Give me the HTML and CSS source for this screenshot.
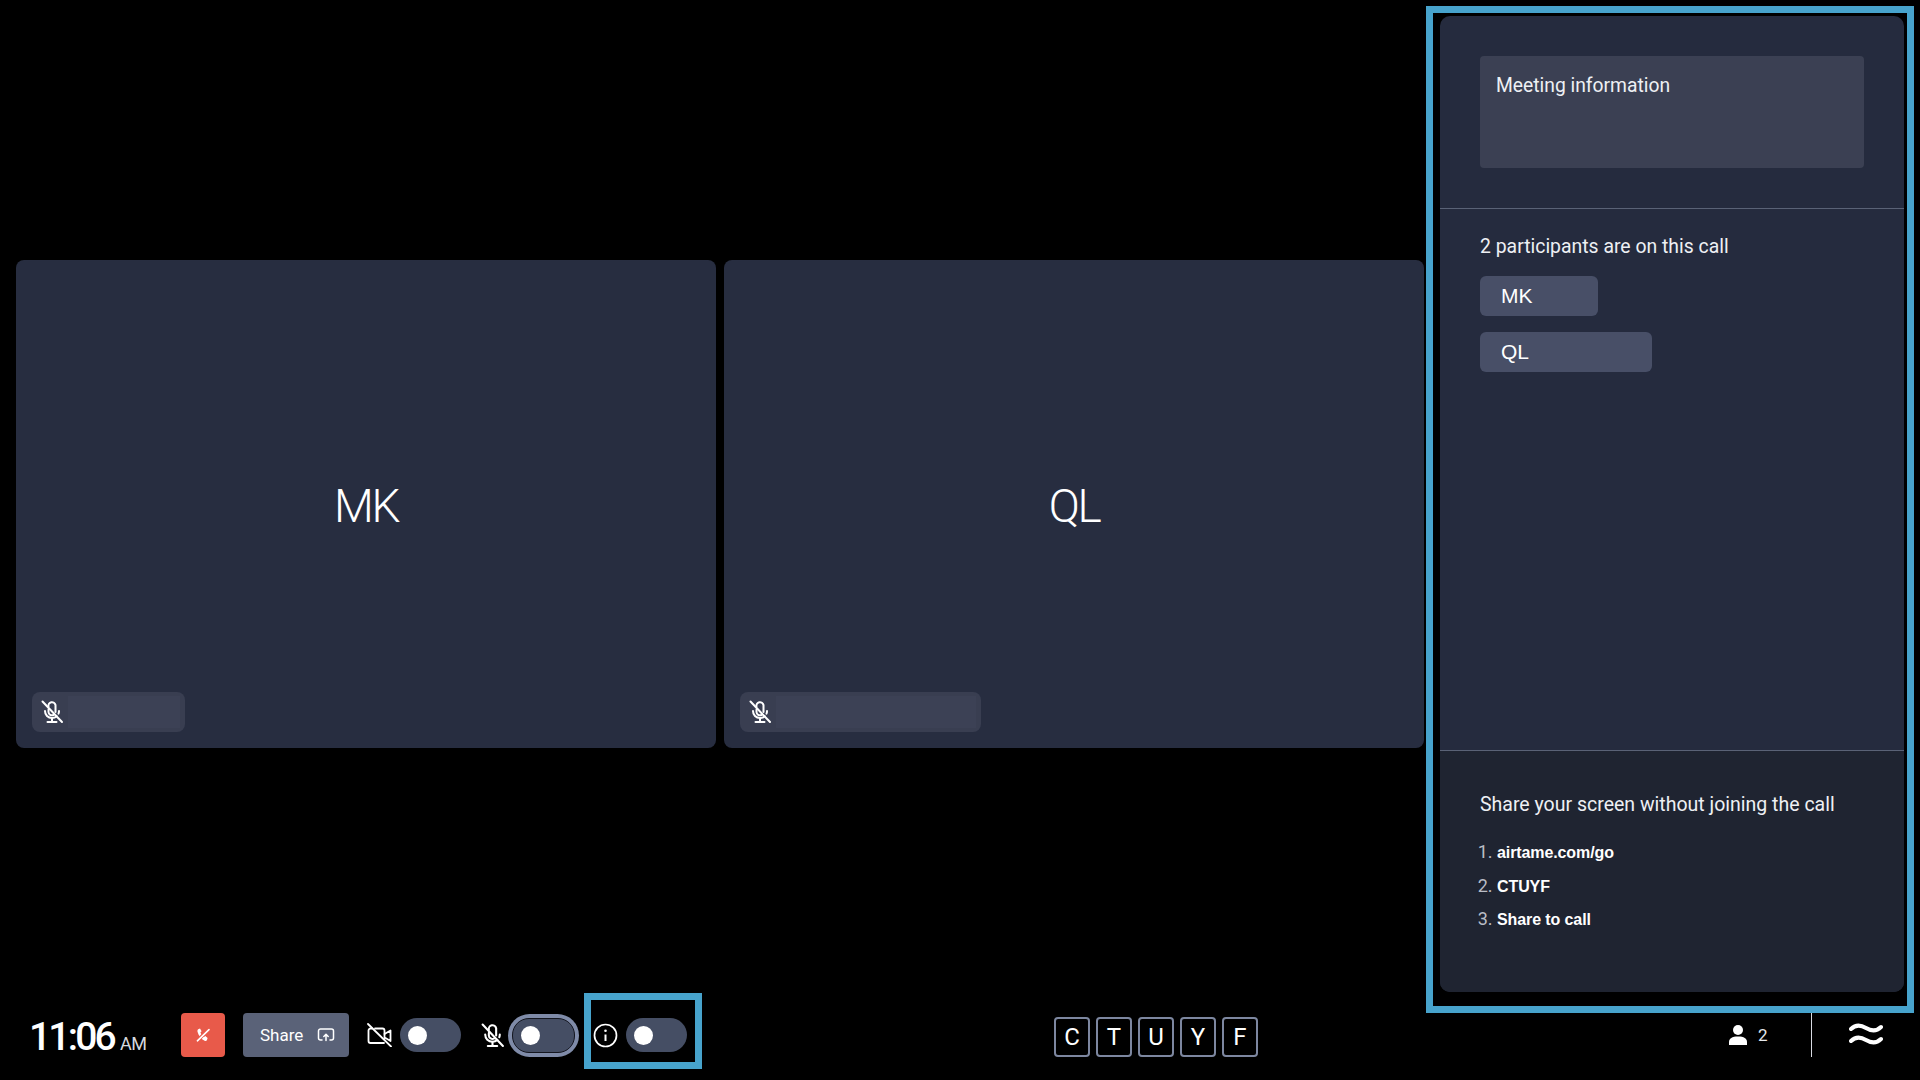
FILE: index.html
```html
<!DOCTYPE html>
<html lang="en">
<head>
  <meta charset="UTF-8">
  <meta name="viewport" content="width=device-width, initial-scale=1.0">
  <title>Meeting</title>
  <link rel="stylesheet" href="styles.css">
</head>
<body>
  <div class="app">
    <div class="top">
      <main class="stage">
        <div class="tile">
          <span class="tile-name">MK</span>
          <div class="tile-label tile-label-short">
            <svg class="tile-mic" viewBox="0 0 24 24"><use href="#icon-mic-off"/></svg>
            <div class="tile-label-fill"></div>
          </div>
        </div>
        <div class="tile">
          <span class="tile-name">QL</span>
          <div class="tile-label tile-label-long">
            <svg class="tile-mic" viewBox="0 0 24 24"><use href="#icon-mic-off"/></svg>
            <div class="tile-label-fill"></div>
          </div>
        </div>
      </main>

      <div class="panel-frame">
        <aside class="panel">
          <section class="panel-info">
            <div class="info-box">Meeting information</div>
          </section>
          <section class="panel-people">
            <p class="people-title">2 participants are on this call</p>
            <div class="chip chip-short">MK</div>
            <div class="chip chip-long">QL</div>
          </section>
          <section class="panel-share">
            <p class="share-title">Share your screen without joining the call</p>
            <ol class="share-steps">
              <li><b>airtame.com/go</b></li>
              <li><b>CTUYF</b></li>
              <li><b>Share to call</b></li>
            </ol>
          </section>
        </aside>
      </div>
    </div>

    <footer class="bar">
      <div class="clock"><span class="clock-time">11:06</span><span class="clock-ampm">AM</span></div>

      <button class="btn-hangup" aria-label="Leave">
        <svg viewBox="0 0 16 16" width="16" height="16">
          <path d="M3.2 2.2 5 1.6 6.6 4.2 5.4 5.6C5.9 7 7.2 8.9 8.8 9.9L10.4 9 12.6 11 12 13C11.6 14 10.6 14.2 9.6 13.8 6.2 12.2 3.6 9 2.6 5 2.3 3.8 2.4 2.8 3.2 2.2Z" fill="#fff"/>
          <path d="M14 2.2 2.2 13.8" stroke="#e85a4a" stroke-width="3.6"/>
          <path d="M14 2.6 2.4 13.8" stroke="#fff" stroke-width="1.6" stroke-linecap="round"/>
        </svg>
      </button>

      <button class="btn-share">
        <span>Share</span>
        <svg viewBox="0 0 18 16" width="18" height="16" fill="none" stroke="#fff" stroke-width="1.5" stroke-linecap="round" stroke-linejoin="round">
          <path d="M5 13H3.5A2 2 0 0 1 1.5 11V4A2 2 0 0 1 3.500 2H14.500A2 2 0 0 1 16.500 4V11A2 2 0 0 1 14.500 13H13"/>
          <path d="M9 13.500V7.500M6.800 9.500 9 7.300 11.200 9.500"/>
        </svg>
      </button>

      <svg class="icon-cam" viewBox="0 0 25 24" fill="none" stroke="#fff" stroke-width="1.8" stroke-linecap="round" stroke-linejoin="round">
        <path d="M5 5.500H3.500A2 2 0 0 0 1.500 7.500V18A2 2 0 0 0 3.500 20H17"/>
        <path d="M8 5.500H15.500A2 2 0 0 1 17.500 7.500V16"/>
        <path d="M17.500 11 23.500 7.500V18L18.500 15"/>
        <path d="M1 1 24 23.500"/>
      </svg>
      <div class="toggle"><span class="knob"></span></div>

      <svg class="icon-mic" viewBox="0 0 24 24"><use href="#icon-mic-off"/></svg>
      <div class="toggle-ring"><div class="toggle toggle-inner"><span class="knob"></span></div></div>

      <div class="info-group">
        <svg class="icon-info" viewBox="0 0 25 25" fill="none" stroke="#fff">
          <circle cx="12.500" cy="12.500" r="11" stroke-width="1.700"/>
          <path d="M12.500 11.500V18" stroke-width="2"/>
          <circle cx="12.500" cy="7.800" r="1.300" fill="#fff" stroke="none"/>
        </svg>
        <div class="toggle"><span class="knob"></span></div>
        <div class="highlight"></div>
      </div>

      <div class="keys">
        <span class="key">C</span>
        <span class="key">T</span>
        <span class="key">U</span>
        <span class="key">Y</span>
        <span class="key">F</span>
      </div>

      <div class="bar-right">
        <svg class="icon-person" viewBox="0 0 18 20" fill="#fff">
          <circle cx="9" cy="5" r="5"/>
          <path d="M0 20V17C0 13.500 3 11.500 9 11.500S18 13.500 18 17V20Z"/>
        </svg>
        <span class="people-count">2</span>
        <div class="bar-divider"></div>
        <svg class="icon-logo" viewBox="0 0 34 24" fill="none" stroke="#fff" stroke-width="4" stroke-linecap="round">
          <path d="M2 6C7 1 12 2 17 5S27 9 32 4"/>
          <path d="M2 18C7 13 12 14 17 17S27 21 32 16"/>
        </svg>
      </div>
    </footer>
  </div>

  <svg class="icon-defs" aria-hidden="true">
    <defs>
      <g id="icon-mic-off" fill="none" stroke="#fff" stroke-width="2" stroke-linecap="round">
        <path d="M8.500 6.500A3.500 3.500 0 0 1 15.500 5V12"/>
        <path d="M8.500 9.500V12A3.500 3.500 0 0 0 13.500 15"/>
        <path d="M5 11C5 15 8 18 12 18 14 18 15.500 17.300 16.700 16.200M19 11C19 12 18.900 12.800 18.500 13.600"/>
        <path d="M12 18V22M7.500 22H16.500"/>
        <path d="M2.500 1.500 22 22"/>
      </g>
    </defs>
  </svg>
</body>
</html>
```

FILE: styles.css
```css
* {
  box-sizing: border-box;
}

body {
  margin: 0;
  padding: 0;
  background-color: #000000;
  color: #ffffff;
  font-family: Roboto, "Liberation Sans", sans-serif;
}

.app {
  width: 1920px;
  height: 1080px;
  overflow: hidden;
}

.top {
  display: flex;
  height: 1013px;
}

.stage {
  width: 1426px;
  padding: 0 0 5px 16px;
  display: flex;
  align-items: center;
  gap: 8px;
}

.tile {
  position: relative;
  width: 700px;
  height: 488px;
  padding-top: 4px;
  background-color: #272d40;
  border-radius: 8px;
  display: flex;
  align-items: center;
  justify-content: center;
}

.tile-name {
  font-size: 46px;
  font-weight: 300;
  letter-spacing: -2.5px;
}

.tile-label {
  position: absolute;
  left: 16px;
  bottom: 16px;
  height: 40px;
  display: flex;
  align-items: stretch;
  background-color: #393e51;
  border-radius: 8px;
  padding: 4px 5px 4px 0;
}

.tile-label-short {
  width: 153px;
}

.tile-label-long {
  width: 241px;
}

.tile-mic {
  width: 24px;
  height: 24px;
  margin: 4px 4px 4px 8px;
  flex-shrink: 0;
}

.tile-label-fill {
  flex: 1;
  background-color: #3c4155;
}

.panel-frame {
  width: 488px;
  height: 1007px;
  margin-top: 6px;
  border: 7px solid #47a3cc;
  padding: 3px 3px 14px 7px;
}

.panel {
  height: 100%;
  display: flex;
  flex-direction: column;
  background-color: #252b3e;
  border-radius: 10px;
  overflow: hidden;
}

.panel-info {
  height: 193px;
  padding: 40px 40px 0;
  border-bottom: 1px solid #5a6276;
}

.info-box {
  height: 112px;
  padding: 18px 16px;
  background-color: #3b4053;
  border-radius: 4px;
  font-size: 19.3px;
  color: #eef0f4;
}

.panel-people {
  flex: 1;
  padding: 26px 40px 0;
}

.people-title {
  margin: 0 0 17px;
  font-size: 19.4px;
  line-height: 24px;
  color: #eef0f4;
}

.chip {
  height: 40px;
  margin-bottom: 16px;
  padding-left: 21px;
  background-color: #484f67;
  border-radius: 6px;
  font-family: "Liberation Sans", sans-serif;
  font-size: 21px;
  line-height: 39px;
}

.chip-short {
  width: 118px;
}

.chip-long {
  width: 172px;
}

.panel-share {
  height: 242px;
  padding: 42px 40px 0;
  background-color: #1f2431;
  border-top: 1px solid #5a6276;
}

.share-title {
  margin: 0 0 21px;
  font-size: 19.5px;
  line-height: 24px;
  color: #eef0f4;
}

.share-steps {
  margin: 0;
  padding: 0 0 0 17px;
  font-size: 18px;
  color: #b9bdc6;
}

.share-steps li {
  height: 33.5px;
  line-height: 28px;
}

.share-steps b {
  font-family: "Liberation Sans", sans-serif;
  font-size: 16px;
  letter-spacing: -0.1px;
  color: #ffffff;
}

.bar {
  display: flex;
  align-items: center;
  height: 44px;
  padding: 0 37px 0 29px;
}

.clock {
  width: 152px;
  padding-top: 4px;
  display: flex;
  align-items: baseline;
  gap: 6px;
}

.clock-time {
  font-size: 39px;
  font-weight: 500;
  letter-spacing: -2.8px;
}

.clock-ampm {
  font-size: 18px;
  color: #d5d8df;
  letter-spacing: -0.5px;
}

.btn-hangup {
  width: 44px;
  height: 44px;
  padding: 0;
  display: flex;
  align-items: center;
  justify-content: center;
  border: none;
  border-radius: 4px;
  background-color: #e85a4a;
}

.btn-share {
  width: 106px;
  height: 44px;
  margin-left: 18px;
  padding: 0 14px 0 17px;
  display: flex;
  align-items: center;
  justify-content: space-between;
  border: none;
  border-radius: 4px;
  background-color: #5a6278;
  color: #ffffff;
  font-family: inherit;
  font-size: 17px;
}

.icon-cam {
  width: 25px;
  height: 24px;
  margin: 0 8px 0 18px;
}

.toggle {
  width: 61px;
  height: 34px;
  padding-left: 8px;
  display: flex;
  align-items: center;
  background-color: #454e64;
  border-radius: 17px;
}

.knob {
  width: 19px;
  height: 19px;
  background-color: #ffffff;
  border-radius: 50%;
}

.icon-mic {
  width: 25px;
  height: 25px;
  margin: 0 3px 0 19px;
}

.toggle-ring {
  width: 71px;
  height: 43px;
  padding: 4px;
  background-color: #7f8ba8;
  border-radius: 22px;
}

.toggle-inner {
  width: 100%;
  height: 100%;
  border: 1px solid #14161f;
}

.info-group {
  position: relative;
  margin-left: 14px;
  display: flex;
  align-items: center;
  gap: 8px;
}

.icon-info {
  width: 25px;
  height: 25px;
}

.highlight {
  position: absolute;
  left: -9px;
  right: -15px;
  top: -25px;
  bottom: -17px;
  border: 7px solid #47a3cc;
}

.keys {
  margin-left: 367px;
  display: flex;
  gap: 6px;
  position: relative;
  top: 2px;
}

.key {
  width: 36px;
  height: 40px;
  display: flex;
  align-items: center;
  justify-content: center;
  border: 2px solid #7d87a0;
  border-radius: 4px;
  font-size: 24px;
}

.bar-right {
  margin-left: auto;
  display: flex;
  align-items: center;
}

.icon-person {
  width: 18px;
  height: 20px;
}

.people-count {
  margin-left: 11px;
  width: 53px;
  font-size: 17px;
  color: #e6e8ec;
}

.bar-divider {
  width: 1px;
  height: 44px;
  margin-right: 37px;
  background-color: #d8dbe2;
}

.icon-logo {
  width: 34px;
  height: 24px;
}

.icon-defs {
  display: none;
}
```
